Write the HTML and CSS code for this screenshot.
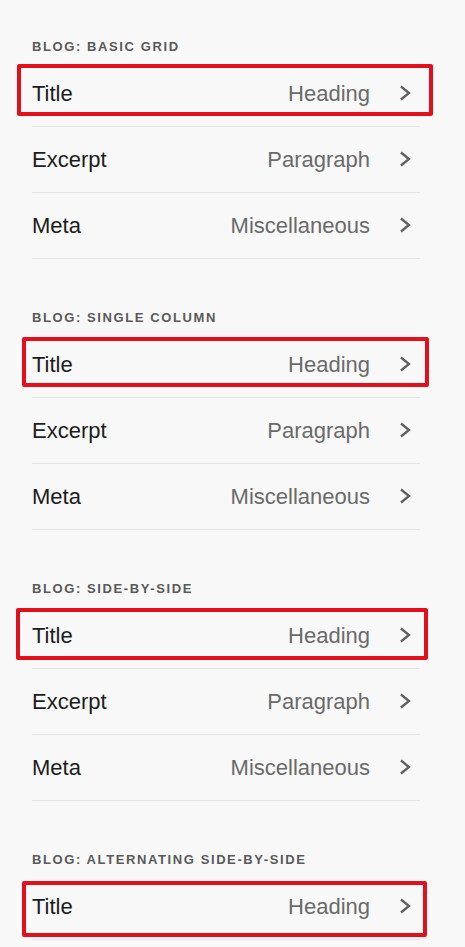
FILE: index.html
```html
<!DOCTYPE html>
<html>
<head>
    <title>Blog Fonts</title>
    <link rel="stylesheet" href="styles.css">
</head>
<body>
    <div class="panel">
        <div class="section">
            <div class="section-title">Blog: Basic Grid</div>
            <div class="row">
                <span class="row-label">Title</span>
                <span class="row-value">Heading</span>
                <svg class="chevron" viewBox="0 0 12 16"><path d="M2 1.5 L10 8 L2 14.5"/></svg>
                <div class="mark mark-1"></div>
            </div>
            <div class="row">
                <span class="row-label">Excerpt</span>
                <span class="row-value">Paragraph</span>
                <svg class="chevron" viewBox="0 0 12 16"><path d="M2 1.5 L10 8 L2 14.5"/></svg>
            </div>
            <div class="row">
                <span class="row-label">Meta</span>
                <span class="row-value">Miscellaneous</span>
                <svg class="chevron" viewBox="0 0 12 16"><path d="M2 1.5 L10 8 L2 14.5"/></svg>
            </div>
        </div>

        <div class="section">
            <div class="section-title">Blog: Single Column</div>
            <div class="row">
                <span class="row-label">Title</span>
                <span class="row-value">Heading</span>
                <svg class="chevron" viewBox="0 0 12 16"><path d="M2 1.5 L10 8 L2 14.5"/></svg>
                <div class="mark mark-2"></div>
            </div>
            <div class="row">
                <span class="row-label">Excerpt</span>
                <span class="row-value">Paragraph</span>
                <svg class="chevron" viewBox="0 0 12 16"><path d="M2 1.5 L10 8 L2 14.5"/></svg>
            </div>
            <div class="row">
                <span class="row-label">Meta</span>
                <span class="row-value">Miscellaneous</span>
                <svg class="chevron" viewBox="0 0 12 16"><path d="M2 1.5 L10 8 L2 14.5"/></svg>
            </div>
        </div>

        <div class="section">
            <div class="section-title">Blog: Side-by-Side</div>
            <div class="row">
                <span class="row-label">Title</span>
                <span class="row-value">Heading</span>
                <svg class="chevron" viewBox="0 0 12 16"><path d="M2 1.5 L10 8 L2 14.5"/></svg>
                <div class="mark mark-3"></div>
            </div>
            <div class="row">
                <span class="row-label">Excerpt</span>
                <span class="row-value">Paragraph</span>
                <svg class="chevron" viewBox="0 0 12 16"><path d="M2 1.5 L10 8 L2 14.5"/></svg>
            </div>
            <div class="row">
                <span class="row-label">Meta</span>
                <span class="row-value">Miscellaneous</span>
                <svg class="chevron" viewBox="0 0 12 16"><path d="M2 1.5 L10 8 L2 14.5"/></svg>
            </div>
        </div>

        <div class="section">
            <div class="section-title">Blog: Alternating Side-by-Side</div>
            <div class="row">
                <span class="row-label">Title</span>
                <span class="row-value">Heading</span>
                <svg class="chevron" viewBox="0 0 12 16"><path d="M2 1.5 L10 8 L2 14.5"/></svg>
                <div class="mark mark-4"></div>
            </div>
        </div>
    </div>
</body>
</html>
```

FILE: styles.css
```css
/* Site styles panel */
body {
    margin: 0;
    background: #f8f8f8;
    font-family: "Liberation Sans", Arial, sans-serif;
}

.panel {
    padding: 40px 45px 0 32px;
}

.section {
    margin-bottom: 52px;
}

.section-title {
    font-size: 13px;
    line-height: 14px;
    font-weight: bold;
    letter-spacing: 1.6px;
    text-transform: uppercase;
    color: #595959;
    margin-bottom: 7px;
}

.row {
    position: relative;
    display: flex;
    align-items: center;
    height: 66px;
    box-sizing: border-box;
    border-bottom: 1px solid #e4e4e4;
    padding-right: 9px;
    font-size: 22px;
}

.row-label {
    flex: 1;
    color: #1c1c1c;
}

.row-value {
    color: #6a6a6a;
}

.chevron {
    width: 12px;
    height: 16px;
    margin-left: 29px;
    margin-top: -2px;
    fill: none;
    stroke: #5f5f5f;
    stroke-width: 2.3;
}

/* red annotation boxes */
.mark {
    position: absolute;
    border: 4px solid #e3101b;
    border-radius: 2px;
}

.mark-1 { left: -15px; right: -13px; top: 3px; bottom: 10px; }
.mark-2 { left: -10px; right: -9px; top: 5px; bottom: 10px; }
.mark-3 { left: -16px; right: -8px; top: 5px; bottom: 8px; }
.mark-4 { left: -10px; right: -7px; top: 7px; bottom: 2px; }
```
